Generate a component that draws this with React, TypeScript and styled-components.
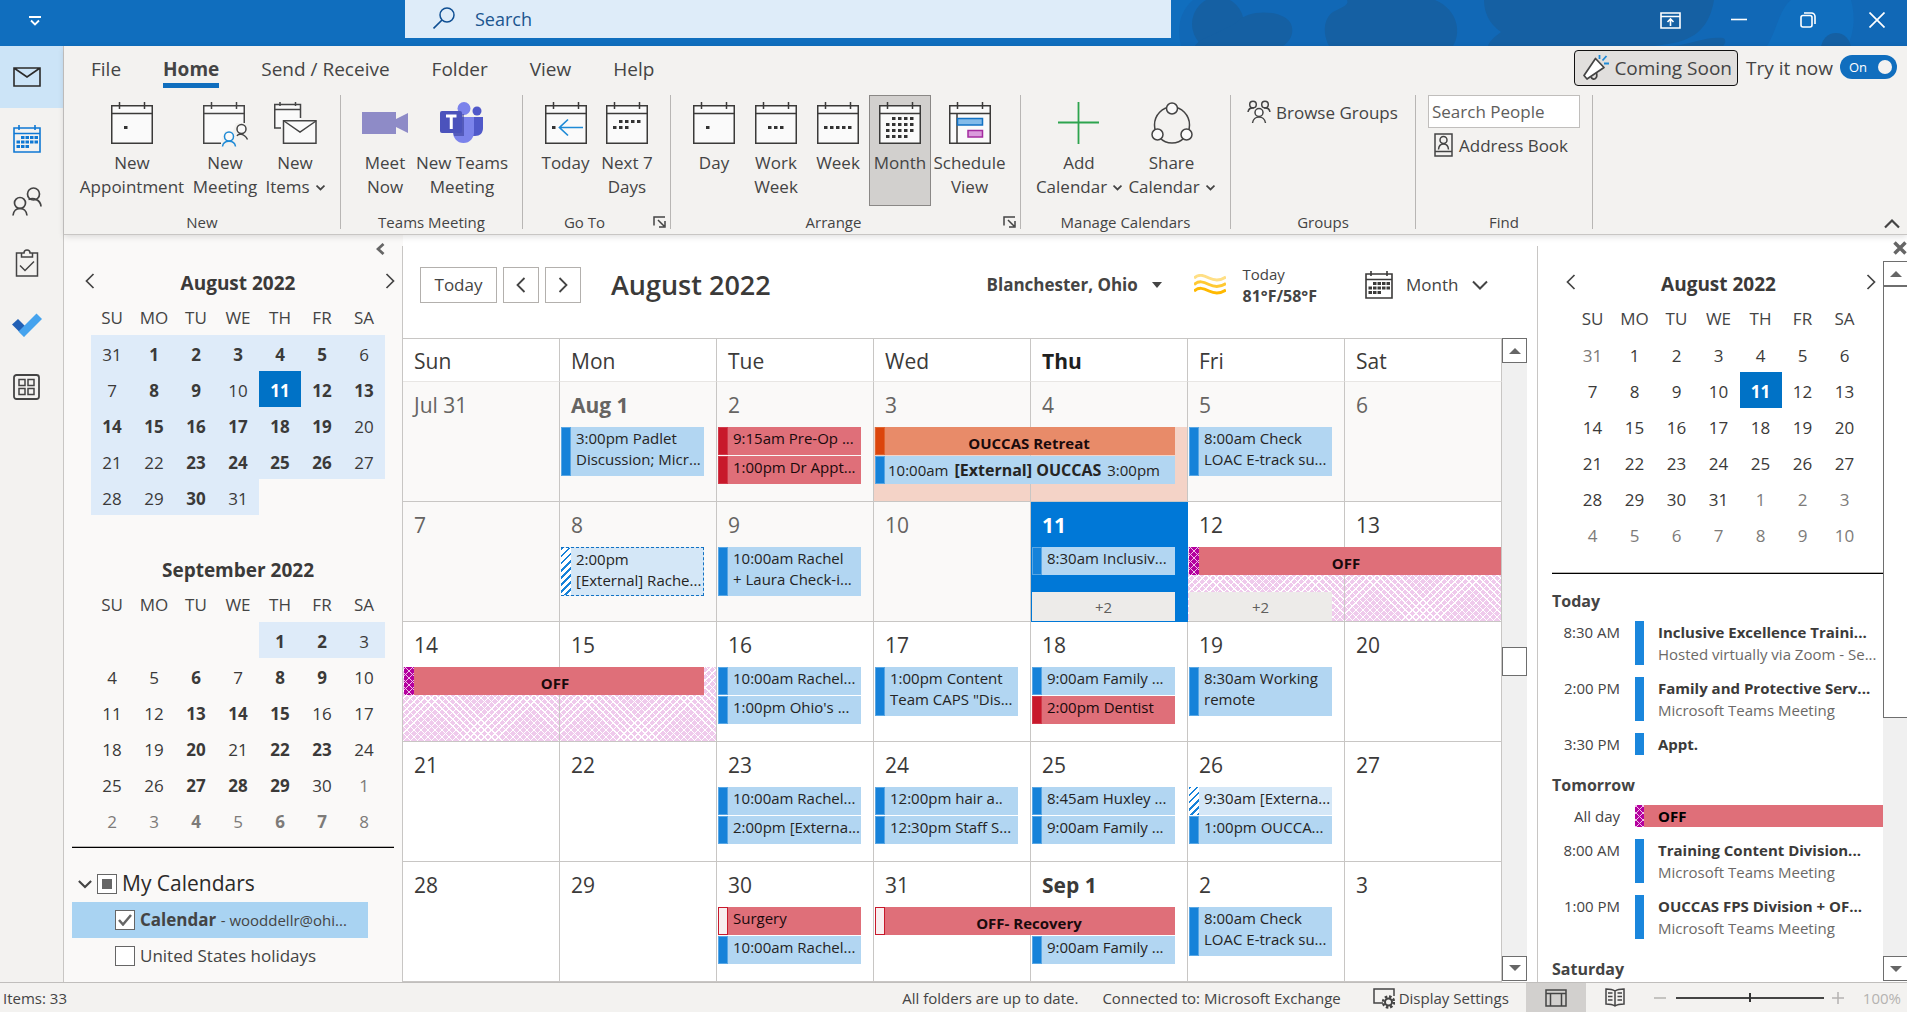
import React from "react";
import styled, { createGlobalStyle, css } from "styled-components";

const BLUE = "#106ebe";
const INK = "#444444";
const LINE = "#c8c6c4";

const GlobalStyle = createGlobalStyle`
  *, *::before, *::after { box-sizing: border-box; }
  body {
    margin: 0;
    background: #f3f2f0;
    color: ${INK};
    font-family: "Open Sans", "Noto Sans", sans-serif;
    font-size: 17px;
  }
  button, input, select { font: inherit; color: inherit; margin: 0; }
  button { border: 0; padding: 0; background: none; cursor: pointer; }
  svg { display: block; flex: none; }
  h1, h2, h3, ul { margin: 0; padding: 0; font-size: inherit; }
  ul { list-style: none; }
`;

/* ---------- shell ---------- */

const Shell = styled.div`
  display: flex;
  flex-direction: column;
  height: 100vh;
  min-width: 1500px;
  overflow: hidden;
`;

const TitleBar = styled.header`
  display: grid;
  grid-template-columns: 405px minmax(300px, 766px) 1fr;
  height: 46px;
  flex: none;
  background: ${BLUE};
  color: #fff;
`;

const QuickAccess = styled.button`
  width: 70px;
  display: grid;
  place-items: center;
  padding-bottom: 4px;
`;

const SearchBox = styled.label`
  display: flex;
  align-items: center;
  gap: 18px;
  height: 38px;
  padding: 0 0 0 28px;
  background: #deecf9;
  color: #0f4f93;
`;

const SearchInput = styled.input`
  flex: 1;
  min-width: 0;
  border: 0;
  outline: 0;
  background: transparent;
  font-size: 18px;
  &::placeholder { color: #1b558f; opacity: 1; }
`;

const Chrome = styled.div`
  display: grid;
  min-width: 0;
  overflow: hidden;
`;

const Artwork = styled.svg`
  grid-area: 1 / 1;
  width: 100%;
  height: 46px;
`;

const WindowButtons = styled.div`
  grid-area: 1 / 1;
  display: flex;
  justify-content: flex-end;
  z-index: 1;
`;

const WindowButton = styled.button`
  display: grid;
  place-items: center;
  width: 69px;
  padding: 0 0 6px 9px;
`;

const Body = styled.div`
  display: flex;
  flex: 1;
  min-height: 0;
`;

const Rail = styled.nav`
  display: flex;
  flex-direction: column;
  width: 64px;
  flex: none;
  border-right: 1px solid ${LINE};
`;

const RailButton = styled.button<{ $active?: boolean }>`
  display: grid;
  place-items: center;
  height: 62px;
  padding-right: 10px;
  background: ${(p) => (p.$active ? "#cce4f7" : "transparent")};
`;

const Workspace = styled.div`
  display: flex;
  flex-direction: column;
  flex: 1;
  min-width: 0;
`;

/* ---------- ribbon ---------- */

const Ribbon = styled.section`
  flex: none;
  border-bottom: 1px solid ${LINE};
  box-shadow: 0 2px 6px rgba(0, 0, 0, 0.12);
  z-index: 1;
`;

const TabRow = styled.div`
  display: flex;
  justify-content: space-between;
  height: 49px;
  padding: 4px 10px 0 27px;
`;

const Tabs = styled.div`
  display: flex;
  gap: 42px;
  align-items: flex-start;
`;

const Tab = styled.button<{ $active?: boolean }>`
  height: 38px;
  padding-top: 5px;
  font-size: 19px;
  line-height: 28px;
  border-bottom: 5px solid ${(p) => (p.$active ? BLUE : "transparent")};
  font-weight: ${(p) => (p.$active ? 700 : 400)};
`;

const TryArea = styled.div`
  display: flex;
  align-items: flex-start;
  gap: 8px;
  font-size: 19px;
`;

const ComingSoon = styled.button`
  display: flex;
  align-items: center;
  gap: 5px;
  height: 36px;
  padding: 0 5px 0 8px;
  border: 1px solid #111;
  border-radius: 4px;
  background: #e1dfdd;
`;

const TryLabel = styled.label`
  display: flex;
  gap: 7px;
  line-height: 36px;
`;

const Switch = styled.span`
  display: grid;
  align-items: center;
  width: 57px;
  height: 24px;
  margin-top: 5px;
  font-size: 13px;
  line-height: 24px;
  color: #fff;
`;

const SwitchInput = styled.input`
  grid-area: 1 / 1;
  appearance: none;
  display: flex;
  align-items: center;
  justify-content: flex-end;
  width: 57px;
  height: 24px;
  padding-right: 5px;
  border-radius: 12px;
  background: ${BLUE};
  &::after {
    content: "";
    width: 14px;
    height: 14px;
    border-radius: 50%;
    background: #f3f2f1;
  }
`;

const SwitchText = styled.span`
  grid-area: 1 / 1;
  padding-left: 9px;
  pointer-events: none;
`;

const Groups = styled.div`
  display: flex;
  height: 139px;
`;

const Group = styled.section<{ $width?: number }>`
  display: flex;
  flex-direction: column;
  justify-content: space-between;
  min-width: ${(p) => p.$width ?? 0}px;
  margin-bottom: 5px;
  padding: 0 12px;
  border-right: 1px solid #b8b6b4;
`;

const GroupFoot = styled.div`
  display: grid;
  grid-template-columns: 1fr auto;
  align-items: center;
  margin: 0 -8px;
  height: 14px;
  line-height: 14px;
  font-size: 15px;
  text-align: center;
  svg { margin-left: 11px; }
`;

const GroupTools = styled.div`
  display: flex;
`;

const ToolStack = styled.div`
  display: flex;
  flex-direction: column;
  align-items: flex-start;
`;

const BigTool = styled.button<{ $width: number; $active?: boolean }>`
  display: flex;
  flex-direction: column;
  align-items: center;
  gap: 7px;
  width: ${(p) => p.$width}px;
  height: 111px;
  padding-top: 6px;
  line-height: 24px;
  white-space: nowrap;
  border: 1px solid ${(p) => (p.$active ? "#8a8886" : "transparent")};
  background: ${(p) => (p.$active ? "#d2d0ce" : "transparent")};
`;

const ToolLabel = styled.span`
  display: flex;
  align-items: center;
  justify-content: center;
  gap: 6px;
`;

const RowTool = styled.button`
  display: flex;
  align-items: center;
  gap: 5px;
  height: 34px;
  padding: 0 4px;
  white-space: nowrap;
`;

const PeopleInput = styled.input`
  width: 152px;
  height: 33px;
  padding: 0 3px;
  border: 1px solid #c0bebc;
  background: #fff;
  &::placeholder { color: #605e5c; opacity: 1; }
`;

const CollapseButton = styled.button`
  margin: auto 7px 2px auto;
`;

/* ---------- panes ---------- */

const Panes = styled.div`
  display: flex;
  flex: 1;
  min-height: 0;
`;

const paneEdge = css`
  border-image: linear-gradient(to bottom, transparent 12px, ${LINE} 12px) 1;
`;

const FolderPane = styled.aside`
  width: 339px;
  flex: none;
  padding: 0 8px;
  background: #faf9f8;
  border-right: 1px solid ${LINE};
  ${paneEdge}
`;

const MiniStack = styled.div`
  display: flex;
  flex-direction: column;
  align-items: flex-end;
  gap: 35px;
`;

const PaneTop = styled.div`
  display: flex;
  justify-content: flex-end;
  align-items: center;
  height: 28px;
  padding-right: 9px;
`;

const Mini = styled.section`
  width: 312px;
  font-size: 17px;
`;

const MiniHead = styled.div`
  display: grid;
  grid-template-columns: 12px 1fr 12px;
  align-items: center;
  height: 36px;
`;

const MiniTitle = styled.h2`
  grid-column: 2;
  padding-top: 4px;
  text-align: center;
  font-size: 19px;
  font-weight: 700;
  color: #3b3a39;
`;

const MiniTable = styled.table`
  margin: 0 auto;
  border-collapse: collapse;
  th, td {
    width: 42px;
    height: 36px;
    padding: 4px 0 0;
    text-align: center;
    font-weight: 400;
    line-height: 24px;
  }
  th { padding-top: 2px; }
`;

const MiniDay = styled.td<{ $shade?: boolean; $bold?: boolean; $dim?: boolean; $today?: boolean }>`
  && {
    font-weight: ${(p) => (p.$bold || p.$today ? 700 : 400)};
    color: ${(p) => (p.$today ? "#fff" : p.$dim ? "#7d7b79" : "#3b3a39")};
    background: ${(p) => (p.$today ? "#0072c6" : p.$shade ? "#deebf9" : "transparent")};
  }
`;

const Rule = styled.hr<{ $top: number; $bottom: number }>`
  height: 2px;
  margin: ${(p) => p.$top}px 0 ${(p) => p.$bottom}px;
  border: 0;
  border-top: 1px solid #b8b6b4;
  background: #000;
`;

const TreeRow = styled.label<{ $level: number; $selected?: boolean }>`
  display: flex;
  align-items: center;
  gap: ${(p) => (p.$level ? 5 : 5)}px;
  width: 296px;
  height: 36px;
  padding-left: ${(p) => (p.$level ? 43 : 6)}px;
  white-space: nowrap;
  font-size: ${(p) => (p.$level ? 17 : 21)}px;
  color: ${(p) => (p.$level ? INK : "#2b2a29")};
  background: ${(p) => (p.$selected ? "#a9d3f2" : "transparent")};
`;

const Tick = styled.span`
  display: grid;
  place-items: center;
  width: 20px;
  height: 20px;
  svg { grid-area: 1 / 1; z-index: 1; pointer-events: none; }
`;

const TickInput = styled.input`
  grid-area: 1 / 1;
  appearance: none;
  width: 20px;
  height: 20px;
  border: 1px solid #666;
  background: #fff;
`;

const TreeText = styled.span`
  padding-bottom: 2px;
`;

const Account = styled.span`
  font-size: 15px;
`;

/* ---------- month view ---------- */

const Main = styled.main`
  display: flex;
  flex-direction: column;
  flex: 1;
  min-width: 0;
  background: #fff;
  border-right: 1px solid ${LINE};
  ${paneEdge}
`;

const MonthBar = styled.div`
  display: flex;
  align-items: center;
  height: 103px;
  flex: none;
  padding: 0 49px 4px 17px;
`;

const Outlined = styled.button<{ $width: number }>`
  display: grid;
  place-items: center;
  width: ${(p) => p.$width}px;
  height: 36px;
  margin-right: 6px;
  border: 1px solid #b3b0ad;
`;

const MonthTitle = styled.h1`
  margin: 0 auto 0 24px;
  font-size: 27px;
  font-weight: 600;
  line-height: 36px;
  color: #3b3a39;
`;

const Picker = styled.label<{ $bold?: boolean; $gap: number }>`
  display: flex;
  align-items: center;
  gap: ${(p) => p.$gap}px;
  font-weight: ${(p) => (p.$bold ? 700 : 400)};
`;

const PickerSelect = styled.select`
  appearance: none;
  border: 0;
  padding: 0;
  background: transparent;
  font-size: 17px;
  line-height: 24px;
`;

const Weather = styled.div`
  display: flex;
  align-items: center;
  gap: 17px;
  margin: 0 48px 0 32px;
  font-size: 15px;
  line-height: 22px;
  strong { display: block; font-size: 16px; }
`;

const MonthArea = styled.div`
  display: flex;
  flex: 1;
  min-height: 0;
  padding-right: 10px;
`;

const MonthGrid = styled.div`
  display: grid;
  grid-template-rows: 44px;
  grid-auto-rows: minmax(0, 1fr);
  flex: 1;
  min-width: 0;
`;

const Weekdays = styled.div`
  display: grid;
  grid-template-columns: repeat(7, minmax(0, 1fr));
  border-top: 1px solid ${LINE};
`;

const Weekday = styled.div<{ $today?: boolean }>`
  padding: 5px 11px 0;
  font-size: 21px;
  line-height: 34px;
  font-weight: ${(p) => (p.$today ? 700 : 400)};
  color: ${(p) => (p.$today ? "#201f1e" : "#3b3a39")};
  border-right: 1px solid ${LINE};
  border-bottom: 1px solid #e8e6e4;
`;

const Week = styled.div`
  display: grid;
  grid-template-columns: repeat(7, minmax(0, 1fr));
  grid-template-rows: 45px 29px 29px minmax(0, 1fr);
`;

const Day = styled.div<{ $col: number; $tone: string; $bold?: boolean }>`
  grid-column: ${(p) => p.$col};
  grid-row: 1 / -1;
  padding: 7px 11px 0;
  font-size: 21px;
  line-height: 32px;
  font-weight: ${(p) => (p.$bold ? 700 : 400)};
  border-right: 1px solid ${LINE};
  border-bottom: 1px solid ${LINE};
  ${(p) =>
    p.$tone === "today"
      ? css`background: #0078d7; border-color: #0078d7; color: #fff;`
      : p.$tone === "past"
        ? css`background: #faf9f8; color: #666462;`
        : css`background: #fff; color: #3b3a39;`}
`;

const hatch = (dot: string, line: string) => css`
  background-color: ${dot};
  background-image: repeating-linear-gradient(45deg, ${line} 0 1px, transparent 1px 5px),
    repeating-linear-gradient(-45deg, ${line} 0 1px, transparent 1px 5px);
`;

const Wash = styled.div<{ $col: number; $kind: string }>`
  grid-column: ${(p) => p.$col};
  grid-row: 2 / -1;
  margin: 0 1px 1px 0;
  ${(p) => (p.$kind === "away" ? hatch("#efcaec", "#ffffff") : css`background: #f4d3c7;`)}
`;

const fills: Record<string, string> = {
  blue: "#b2d6f2",
  red: "#df6f79",
  orange: "#e88b69",
  pale: "#d4e7f7",
};

const strips: Record<string, ReturnType<typeof css>> = {
  blue: css`background: #1682d9; border: 1px solid #58a6e4;`,
  red: css`background: #c8192b; border: 1px solid #d0394a;`,
  orange: css`background: #dc450c; border: 1px solid #e0642f;`,
  tentative: css`background: repeating-linear-gradient(135deg, #1682d9 0 2px, #fff 2px 5px);`,
  away: hatch("#b4009e", "#f1bfe9"),
  free: css`background: #f8eff0; border: 1px solid #c8192b;`,
};

const Event = styled.button<{ $col: number; $span: number; $row: number; $lines: number; $fill: string; $dashed?: boolean; $open?: boolean }>`
  grid-column: ${(p) => p.$col} / span ${(p) => p.$span};
  grid-row: ${(p) => p.$row + 1} / span ${(p) => p.$lines};
  display: flex;
  height: ${(p) => (p.$lines === 2 ? 49 : 28)}px;
  margin-left: 1px;
  margin-right: ${(p) => (p.$open ? 1 : 13)}px;
  overflow: hidden;
  text-align: left;
  font-size: 15px;
  line-height: 21px;
  white-space: nowrap;
  color: ${(p) => (p.$fill === "red" || p.$fill === "orange" ? "#1a0a0c" : "#252423")};
  background: ${(p) => fills[p.$fill]};
  ${(p) => p.$dashed && css`border: 1px dashed #1272c4; border-left: 0;`}
`;

const Strip = styled.span<{ $kind: string }>`
  width: 10px;
  flex: none;
  ${(p) => strips[p.$kind]}
`;

const EventText = styled.span<{ $center?: boolean; $balanced?: boolean }>`
  display: block;
  flex: 1;
  min-width: 0;
  padding: ${(p) => (p.$center ? `6px ${p.$balanced ? 8 : 2}px 0 0` : "1px 0 0 5px")};
  text-align: ${(p) => (p.$center ? "center" : "left")};
  font-weight: ${(p) => (p.$center ? 700 : 400)};
`;

const EventLine = styled.span`
  display: block;
`;

const TimedText = styled.span`
  display: flex;
  gap: 6px;
  padding: 4px 0 0 3px;
  strong { font-size: 16px; }
`;

const More = styled.button<{ $col: number }>`
  grid-column: ${(p) => p.$col};
  grid-row: 3 / -1;
  align-self: end;
  height: 29px;
  margin: 0 13px 1px 1px;
  background: #edebe9;
  color: #605e5c;
  font-size: 15px;
`;

/* ---------- scroll bars ---------- */

const ScrollTrack = styled.div`
  display: flex;
  flex-direction: column;
  width: 25px;
  flex: none;
  margin: 0 0 1px;
  background: #f0f0f0;
`;

const ScrollArrow = styled.button`
  display: grid;
  place-items: center;
  height: 25px;
  flex: none;
  border: 1px solid #6e6e6e;
  background: #fff;
`;

const ScrollThumb = styled.div<{ $grow: number }>`
  flex: ${(p) => p.$grow};
  border: 1px solid #6e6e6e;
  background: #fff;
`;

const ScrollSpace = styled.div<{ $grow: number }>`
  flex: ${(p) => p.$grow};
`;

/* ---------- to-do pane ---------- */

const TodoPane = styled.aside`
  display: grid;
  grid-template-columns: minmax(0, 1fr) 24px;
  grid-template-rows: 26px minmax(0, 1fr);
  width: 369px;
  flex: none;
  background: #fff;
`;

const CloseButton = styled.button`
  grid-column: 2;
  display: grid;
  place-items: center;
  padding: 0 0 0 10px;
  margin-top: 6px;
  height: 14px;
`;

const Agenda = styled.div`
  grid-row: 2;
  padding: 3px 0 0 14px;
  overflow: hidden;
`;

const AgendaCalendar = styled.div`
  display: flex;
  justify-content: center;
  padding-left: 2px;
`;

const AgendaDay = styled.h3`
  font-size: 16px;
  font-weight: 700;
  line-height: 22px;
  white-space: nowrap;
  margin-bottom: 9px;
`;

const AgendaList = styled.ul`
  margin-bottom: 19px;
`;

const AgendaItem = styled.li`
  display: grid;
  grid-template-columns: 68px 9px minmax(0, 1fr);
  column-gap: 15px;
  margin-bottom: 12px;
  font-size: 15px;
  line-height: 22px;
  white-space: nowrap;
`;

const AgendaTime = styled.span`
  text-align: right;
`;

const AgendaBar = styled.span<{ $away?: boolean }>`
  ${(p) => (p.$away ? hatch("#b4009e", "#f1bfe9") : css`background: #1a86dc;`)}
`;

const AgendaText = styled.span<{ $away?: boolean }>`
  margin-left: -15px;
  padding-left: 14px;
  overflow: hidden;
  color: #6b6967;
  ${(p) => p.$away && css`background: #df6f79;`}
  strong { display: block; color: ${(p) => (p.$away ? "#000" : "#3b3a39")}; }
`;

/* ---------- status bar ---------- */

const StatusBar = styled.footer`
  display: flex;
  align-items: center;
  height: 30px;
  flex: none;
  border-top: 1px solid #c0bebc;
  padding: 0 6px 0 3px;
  font-size: 15px;
  white-space: nowrap;
`;

const StatusText = styled.span<{ $push?: boolean }>`
  margin: 0 24px 0 ${(p) => (p.$push ? "auto" : "0")};
`;

const StatusButton = styled.button<{ $active?: boolean; $width?: number }>`
  display: flex;
  align-items: center;
  justify-content: center;
  gap: 4px;
  width: ${(p) => (p.$width ? `${p.$width}px` : "auto")};
  height: 29px;
  background: ${(p) => (p.$active ? "#d2d0ce" : "transparent")};
`;

const DisplayButton = styled(StatusButton)`
  margin: 0 17px 0 8px;
`;

const ZoomRange = styled.input`
  appearance: none;
  width: 148px;
  height: 14px;
  margin: 0 8px 0 0;
  background: linear-gradient(#444, #444) center / 100% 2px no-repeat;
  &::-webkit-slider-thumb {
    appearance: none;
    width: 2px;
    height: 9px;
    background: #333;
  }
`;

const ZoomValue = styled.span`
  margin-left: 19px;
  color: #b5b3b1;
`;

/* ---------- drawings ---------- */

const stroke = { fill: "none", stroke: "#444", strokeWidth: 1.5 } as const;

const Chevron = ({ dir, size = 16, width = 2 }: { dir: "left" | "right" | "up" | "down"; size?: number; width?: number }) => {
  const paths = { left: "M11.5 1 4.5 8l7 7", right: "M4.5 1l7 7-7 7", up: "M1 11.5 8 4.5l7 7", down: "M1 4.5l7 7 7-7" };
  return (
    <svg width={size} height={size} viewBox="0 0 16 16" aria-hidden>
      <path d={paths[dir]} fill="none" stroke="#444" strokeWidth={width} />
    </svg>
  );
};

const Caret = ({ up }: { up?: boolean }) => (
  <svg width="12" height="6" viewBox="0 0 12 6" aria-hidden>
    <path d={up ? "M0 6 6 0l6 6z" : "M0 0h12L6 6z"} fill="#666" />
  </svg>
);

const SheetIcon = ({ rows = [], children }: { rows?: [number, number[]][]; children?: React.ReactNode }) => (
  <svg width="42" height="42" viewBox="0 0 42 42" aria-hidden>
    <path d="M.75 3.75h40.5v37.5H.75z" fill="#fafafa" stroke="#3b3a39" strokeWidth="1.5" />
    <path d="M1 11.5h40M8.5 0v7M33.5 0v7" stroke="#3b3a39" strokeWidth="1.5" />
    {rows.map(([y, xs]) => xs.map((x) => <rect key={`${x}-${y}`} x={x - 2} y={y - 1.5} width="3.5" height="3" fill="#333" />))}
    {children}
  </svg>
);

const MeetingIcon = () => (
  <svg width="46" height="42" viewBox="0 0 46 42" overflow="visible" aria-hidden>
    <path d="M1.75 3.75h40.5v37.5H1.75z" fill="#fafafa" />
    <path d="M42.25 21V3.75H1.75v37.5H20M2 11.5h40M9.5 0v7M34.5 0v7" {...stroke} />
    <path d="M19 45v-6l4-10h8l3-8h12v24z" fill="#f3f2f0" />
    <circle cx="39.5" cy="27" r="4.5" {...stroke} fill="#fafafa" />
    <path d="M35 34c1-2 7-3.5 10.5 3.5" {...stroke} />
    <circle cx="27" cy="34.5" r="4.5" {...stroke} fill="#fafafa" stroke="#1e8ad6" />
    <path d="M20.5 44.5c1-7 12-7 13 0" {...stroke} stroke="#1e8ad6" />
  </svg>
);

const ItemsIcon = () => (
  <svg width="43" height="42" viewBox="0 0 43 42" aria-hidden>
    <path d="M.75 2.5h26V26H.75z" fill="#fafafa" />
    <path d="M26.5 16V2.5H.75V26H7M1 7.5h26M6 0v4M21.5 0v4" {...stroke} />
    <path d="M9.5 18.75h32.5v22.5H9.5z" {...stroke} fill="#fafafa" />
    <path d="M10 19l16 11 16-11" {...stroke} />
  </svg>
);

const CameraIcon = () => (
  <svg width="46" height="42" viewBox="0 0 46 42" aria-hidden>
    <path d="M0 10h34v7l12-6v20l-12-6v7H0z" fill="#8e8bc7" />
  </svg>
);

const TeamsIcon = () => (
  <svg width="44" height="42" viewBox="0 0 44 42" aria-hidden>
    <circle cx="24" cy="6.5" r="6.5" fill="#7b83eb" />
    <circle cx="37" cy="9" r="4.5" fill="#5059c9" />
    <path d="M31 15h12v11c0 5-3 8-8 8h-4z" fill="#5059c9" />
    <path d="M13 15h21v15c0 6-4 11-10.5 11S13 36 13 30z" fill="#7b83eb" />
    <path d="M10 12h14v22H14z" fill="#343a94" opacity=".55" />
    <rect x="0" y="9" width="22" height="22" rx="2" fill="#4b53bc" />
    <path d="M6 14h10.5M11.25 14v13" stroke="#fff" strokeWidth="3" />
  </svg>
);

const PlusIcon = () => (
  <svg width="42" height="42" viewBox="0 0 42 42" aria-hidden>
    <path d="M20.5 0v42M0 20.5h41" stroke="#2da44e" strokeWidth="1.8" />
  </svg>
);

const ShareIcon = () => (
  <svg width="42" height="42" viewBox="0 0 42 42" aria-hidden>
    <ellipse cx="21" cy="23" rx="17.5" ry="18" {...stroke} />
    <circle cx="21" cy="6.5" r="5.5" {...stroke} fill="#fafafa" />
    <circle cx="6.5" cy="32.5" r="5.5" {...stroke} fill="#fafafa" />
    <circle cx="35.5" cy="32.5" r="5.5" {...stroke} fill="#fafafa" />
  </svg>
);

const GroupIcon = () => (
  <svg width="24" height="24" viewBox="0 0 24 24" aria-hidden>
    <g {...stroke}>
      <circle cx="6" cy="4.5" r="3.3" />
      <circle cx="18" cy="4.5" r="3.3" />
      <circle cx="12" cy="12.5" r="4" fill="#fafafa" />
      <path d="M1 12c.5-3 3-4.5 6-4M23 12c-.5-3-3-4.5-6-4M5.5 23c1-8 12-8 13 0" />
    </g>
  </svg>
);

const BookIcon = () => (
  <svg width="22" height="24" viewBox="-2 0 22 24" aria-hidden>
    <path d="M1 1h17v22H1zM1 18.5h17" {...stroke} />
    <circle cx="9.5" cy="7" r="3.5" {...stroke} />
    <path d="M4.5 16.5c.5-7.5 9.500-7.500 10 0" {...stroke} />
  </svg>
);

const Launcher = () => (
  <svg width="13" height="12" viewBox="0 0 13 12" aria-hidden>
    <path d="M1 9.5V1h11M5 4l6 6M12 5v6H6" {...stroke} />
  </svg>
);

const MegaphoneIcon = () => (
  <svg width="26" height="26" viewBox="0 0 26 26" aria-hidden>
    <path d="M12.500 3.500l8.500 9L4 24l-3-3.500z" {...stroke} strokeWidth="1.700" fill="#fff" strokeLinejoin="round" />
    <path d="M8 22c2 4 7 2 5.500-4" {...stroke} strokeWidth="1.700" />
    <path d="M16.500 4V0M19.500 5.500 23.500 1M21 8.500H26" stroke="#1e8ad6" strokeWidth="1.800" />
  </svg>
);

const SmallCalendar = ({ color }: { color: string }) => (
  <svg width="28" height="28" viewBox="0 0 28 28" aria-hidden>
    <path d="M1 3h26v24H1zM1 8.500h26M6 0v5M22 0v5" fill="none" stroke={color} strokeWidth="1.6" />
    {[0, 1, 2, 3].map((i) => <rect key={i} x={8 + i * 4.5} y="11" width="3.5" height="3" fill={color} />)}
    {[0, 1, 2, 3, 4].map((i) => <rect key={i} x={3.5 + i * 4.5} y="15.5" width="3.5" height="3" fill={color} />)}
    {[0, 1, 2].map((i) => <rect key={i} x={3.5 + i * 4.5} y="20" width="3.5" height="3" fill={color} />)}
  </svg>
);

const MailIcon = () => (
  <svg width="28" height="20" viewBox="0 0 28 20" aria-hidden>
    <path d="M1 1h26v18H1zM1 1l13 9 13-9" fill="none" stroke="#2b2a29" strokeWidth="1.6" />
  </svg>
);

const PeopleIcon = () => (
  <svg width="30" height="29" viewBox="0 0 30 29" aria-hidden>
    <g {...stroke} strokeWidth="1.7">
      <circle cx="21.5" cy="7" r="6" />
      <path d="M16.5 12.5c5-2 12 0 12.500 7" />
      <circle cx="8" cy="16" r="5.5" />
      <path d="M1 28.5c1-9.500 13-9.500 14 0" />
    </g>
  </svg>
);

const TasksIcon = () => (
  <svg width="24" height="28" viewBox="0 0 24 28" aria-hidden>
    <path d="M7 4H1.5v23h21V4H17M6.500 8V4H9c0-4 6-4 6 0h2.500v4z" {...stroke} />
    <path d="M5 16.5l5 5L19 12.500" {...stroke} />
  </svg>
);

const TodoIcon = () => (
  <svg width="30" height="26" viewBox="0 0 30 26" aria-hidden>
    <path d="M0 12.500 6 7l11 11-5 6.500z" fill="#2160b5" />
    <path d="M24.500 1.500 30 7 12 25l-5.500-5.500z" fill="#45a3ee" />
  </svg>
);

const AppsIcon = () => (
  <svg width="27" height="26" viewBox="0 0 27 26" aria-hidden>
    <rect x="1" y="1" width="25" height="24" rx="2.500" {...stroke} strokeWidth="1.8" />
    <path d="M6 5.500h6v6H6zM15 5.500h6v6h-6zM6 14.500h6v6H6zM15 14.500h6v6h-6z" {...stroke} />
  </svg>
);

const WindIcon = () => (
  <svg width="32" height="22" viewBox="0 0 32 22" aria-hidden>
    {[["#ffdf85", 4], ["#ffc933", 10.5], ["#ffb900", 17]].map(([c, y]) => (
      <path key={y} d={`M0 ${y}c5-4 9-3 15 0s11 3 17-1`} fill="none" stroke={c as string} strokeWidth="3" />
    ))}
  </svg>
);

const HeaderArt = () => (
  <Artwork viewBox="0 0 736 46" preserveAspectRatio="xMinYMin slice" aria-hidden>
    <path d="M22 0h275v46H10C6 28 8 12 22 0z" fill="#1168b6" />
    <path d="M290 0h330c-12 10-14 30-24 46H290zM680 0h56v46h-60c8-14 8-32 4-46z" fill="#1168b6" />
    <g fill="#1560a3">
      <ellipse cx="47" cy="24" rx="26" ry="27" />
      <path d="M66 22c12-14 48-12 54 2 4 10-2 18-8 22H24c4-8 24-12 42-24z" />
      <path d="M176 0h88c24 10 26 34 18 46H158c-8-16-4-32 8-36 8-4 12-6 10-10z" />
      <path d="M313 0h230c-4 24-16 40-46 44l-14 2H317c2-6 8-10 13-14-12-8-17-20-17-32z" />
      <path d="M502 46c18-2 34-10 50-8 4 2 2 6 0 8z" />
      <circle cx="665" cy="48" r="15" />
    </g>
  </Artwork>
);

/* ---------- data ---------- */

type MiniProps = {
  title: string;
  weeks: string[];
  bold?: number[];
  today?: number;
  shade?: [number, number];
  dimBefore?: number;
  dimFrom: number;
  nav?: boolean;
};

const MiniCalendar = ({ title, weeks, bold = [], today, shade, dimBefore = 0, dimFrom, nav }: MiniProps) => (
  <Mini>
    <MiniHead>
      {nav && <button aria-label="Previous month"><Chevron dir="left" width={1.7} /></button>}
      <MiniTitle>{title}</MiniTitle>
      {nav && <button aria-label="Next month"><Chevron dir="right" width={1.7} /></button>}
    </MiniHead>
    <MiniTable>
      <thead>
        <tr>{["SU", "MO", "TU", "WE", "TH", "FR", "SA"].map((d) => <th key={d} scope="col">{d}</th>)}</tr>
      </thead>
      <tbody>
        {weeks.map((week, w) => (
          <tr key={w}>
            {week.split(",").map((label, d) => {
              const i = w * 7 + d;
              return (
                <MiniDay
                  key={d}
                  $bold={bold.includes(i)}
                  $today={i === today}
                  $shade={!!shade && label !== "" && i >= shade[0] && i <= shade[1]}
                  $dim={i < dimBefore || i >= dimFrom}
                >
                  {label}
                </MiniDay>
              );
            })}
          </tr>
        ))}
      </tbody>
    </MiniTable>
  </Mini>
);

type Item = {
  col: number;
  row?: number;
  span?: number;
  lines: string[];
  fill?: string;
  strip?: string;
  center?: boolean;
  dashed?: boolean;
  open?: boolean;
  until?: string;
};

type WeekData = { days: string[]; past?: number; today?: number; wash?: [number, string][]; more?: number[]; items: Item[] };

const month: WeekData[] = [
  {
    days: ["Jul 31", "Aug 1", "2", "3", "4", "5", "6"],
    past: 7,
    wash: [[4, "busy"], [5, "busy"]],
    items: [
      { col: 2, lines: ["3:00pm Padlet", "Discussion; Micr..."] },
      { col: 3, lines: ["9:15am Pre-Op ..."], fill: "red" },
      { col: 3, row: 2, lines: ["1:00pm Dr Appt..."], fill: "red" },
      { col: 4, span: 2, lines: ["OUCCAS Retreat"], fill: "orange", center: true },
      { col: 4, row: 2, span: 2, lines: ["10:00am", "[External] OUCCAS"], until: "3:00pm" },
      { col: 6, lines: ["8:00am Check", "LOAC E-track su..."] },
    ],
  },
  {
    days: ["7", "8", "9", "10", "11", "12", "13"],
    past: 4,
    today: 4,
    wash: [[6, "away"], [7, "away"]],
    more: [5, 6],
    items: [
      { col: 2, lines: ["2:00pm", "[External] Rache..."], fill: "pale", strip: "tentative", dashed: true },
      { col: 3, lines: ["10:00am Rachel", "+ Laura Check-i..."] },
      { col: 5, lines: ["8:30am Inclusiv..."] },
      { col: 6, span: 2, lines: ["OFF"], fill: "red", strip: "away", center: true, open: true },
    ],
  },
  {
    days: ["14", "15", "16", "17", "18", "19", "20"],
    wash: [[1, "away"], [2, "away"]],
    items: [
      { col: 1, span: 2, lines: ["OFF"], fill: "red", strip: "away", center: true },
      { col: 3, lines: ["10:00am Rachel..."] },
      { col: 3, row: 2, lines: ["1:00pm Ohio's ..."] },
      { col: 4, lines: ["1:00pm Content", "Team CAPS \"Dis..."] },
      { col: 5, lines: ["9:00am Family ..."] },
      { col: 5, row: 2, lines: ["2:00pm Dentist"], fill: "red" },
      { col: 6, lines: ["8:30am Working", "remote"] },
    ],
  },
  {
    days: ["21", "22", "23", "24", "25", "26", "27"],
    items: [
      { col: 3, lines: ["10:00am Rachel..."] },
      { col: 3, row: 2, lines: ["2:00pm [Externa..."] },
      { col: 4, lines: ["12:00pm hair a.."] },
      { col: 4, row: 2, lines: ["12:30pm Staff S..."] },
      { col: 5, lines: ["8:45am Huxley ..."] },
      { col: 5, row: 2, lines: ["9:00am Family ..."] },
      { col: 6, lines: ["9:30am [Externa..."], fill: "pale", strip: "tentative" },
      { col: 6, row: 2, lines: ["1:00pm OUCCA..."] },
    ],
  },
  {
    days: ["28", "29", "30", "31", "Sep 1", "2", "3"],
    items: [
      { col: 3, lines: ["Surgery"], fill: "red", strip: "free" },
      { col: 3, row: 2, lines: ["10:00am Rachel..."] },
      { col: 4, span: 2, lines: ["OFF- Recovery"], fill: "red", strip: "free", center: true },
      { col: 5, row: 2, lines: ["9:00am Family ..."] },
      { col: 6, lines: ["8:00am Check", "LOAC E-track su..."] },
    ],
  },
];

const MonthEvent = ({ item }: { item: Item }) => {
  const fill = item.fill ?? "blue";
  const tall = item.lines.length === 2 && !item.until;
  return (
    <Event $col={item.col} $span={item.span ?? 1} $row={item.row ?? 1} $lines={tall ? 2 : 1} $fill={fill} $dashed={item.dashed} $open={item.open}>
      <Strip $kind={item.strip ?? fill} />
      {item.until ? (
        <TimedText>
          <span>{item.lines[0]}</span>
          <strong>{item.lines[1]}</strong>
          <span>{item.until}</span>
        </TimedText>
      ) : (
        <EventText $center={item.center} $balanced={item.strip === "away"}>
          {item.lines.map((line) => <EventLine key={line}>{line}</EventLine>)}
        </EventText>
      )}
    </Event>
  );
};

type AgendaEntry = { time: string; title: string; place?: string; away?: boolean };

const AgendaRows = ({ entries }: { entries: AgendaEntry[] }) => (
  <AgendaList>
    {entries.map((e) => (
      <AgendaItem key={e.time}>
        <AgendaTime>{e.time}</AgendaTime>
        <AgendaBar $away={e.away} />
        <AgendaText $away={e.away}>
          <strong>{e.title}</strong>
          {e.place}
        </AgendaText>
      </AgendaItem>
    ))}
  </AgendaList>
);

const Tool = ({ icon, lines, width, active, menu }: { icon: React.ReactNode; lines: string[]; width: number; active?: boolean; menu?: boolean }) => (
  <BigTool $width={width} $active={active}>
    {icon}
    <span>
      {lines.map((line, i) => (
        <ToolLabel key={line}>
          {line}
          {menu && i === lines.length - 1 && <Chevron dir="down" size={9} width={3} />}
        </ToolLabel>
      ))}
    </span>
  </BigTool>
);

const RibbonGroup = ({ name, width, launcher, children }: { name: string; width?: number; launcher?: boolean; children: React.ReactNode }) => (
  <Group $width={width} aria-label={name}>
    <GroupTools>{children}</GroupTools>
    <GroupFoot>
      <span>{name}</span>
      {launcher && <Launcher />}
    </GroupFoot>
  </Group>
);

export default function App() {
  return (
    <Shell>
      <GlobalStyle />
      <TitleBar>
        <QuickAccess aria-label="Customize Quick Access Toolbar">
          <svg width="12" height="10" viewBox="0 0 12 10" aria-hidden>
            <path d="M0 1h12M2 4.500l4 4 4-4" fill="none" stroke="#fff" strokeWidth="1.8" />
          </svg>
        </QuickAccess>
        <SearchBox>
          <svg width="22" height="24" viewBox="0 0 22 24" aria-hidden>
            <circle cx="14" cy="8" r="7" fill="none" stroke="#0f4f93" strokeWidth="1.5" />
            <path d="M9 13l-8.500 8.500" stroke="#0f4f93" strokeWidth="1.7" />
          </svg>
          <SearchInput placeholder="Search" aria-label="Search" />
        </SearchBox>
        <Chrome>
          <HeaderArt />
          <WindowButtons>
            <WindowButton aria-label="Ribbon Display Options">
              <svg width="21" height="17" viewBox="0 0 21 17" aria-hidden>
                <path d="M1 1h19v15H1zM1 4.500h19M10.500 14V7M7.500 10l3-3 3 3" fill="none" stroke="#fff" strokeWidth="1.6" />
              </svg>
            </WindowButton>
            <WindowButton aria-label="Minimize">
              <svg width="16" height="16" viewBox="0 0 16 16" aria-hidden><path d="M0 7.500h16" stroke="#fff" strokeWidth="1.6" /></svg>
            </WindowButton>
            <WindowButton aria-label="Restore">
              <svg width="16" height="16" viewBox="0 0 16 16" aria-hidden>
                <rect x="1" y="3.500" width="11" height="11.500" rx="2" fill="none" stroke="#fff" strokeWidth="1.6" />
                <path d="M4 1h7.500A3.500 3.500 0 0 1 15 4.500V12" fill="none" stroke="#fff" strokeWidth="1.6" />
              </svg>
            </WindowButton>
            <WindowButton aria-label="Close">
              <svg width="16" height="16" viewBox="0 0 16 16" aria-hidden><path d="M.5.5l15 15m0-15-15 15" stroke="#fff" strokeWidth="1.7" /></svg>
            </WindowButton>
          </WindowButtons>
        </Chrome>
      </TitleBar>

      <Body>
        <Rail aria-label="Modules">
          <RailButton $active aria-label="Mail"><MailIcon /></RailButton>
          <RailButton aria-label="Calendar"><SmallCalendar color="#0f78d4" /></RailButton>
          <RailButton aria-label="People"><PeopleIcon /></RailButton>
          <RailButton aria-label="Tasks"><TasksIcon /></RailButton>
          <RailButton aria-label="To Do"><TodoIcon /></RailButton>
          <RailButton aria-label="More Apps"><AppsIcon /></RailButton>
        </Rail>

        <Workspace>
          <Ribbon>
            <TabRow>
              <Tabs>
                {["File", "Home", "Send / Receive", "Folder", "View", "Help"].map((t) => (
                  <Tab key={t} $active={t === "Home"}>{t}</Tab>
                ))}
              </Tabs>
              <TryArea>
                <ComingSoon><MegaphoneIcon />Coming Soon</ComingSoon>
                <TryLabel>
                  Try it now
                  <Switch>
                    <SwitchInput type="checkbox" defaultChecked />
                    <SwitchText>On</SwitchText>
                  </Switch>
                </TryLabel>
              </TryArea>
            </TabRow>
            <Groups>
              <RibbonGroup name="New">
                <Tool width={112} icon={<SheetIcon rows={[[25.5, [15]]]} />} lines={["New", "Appointment"]} />
                <Tool width={74} icon={<MeetingIcon />} lines={["New", "Meeting"]} />
                <Tool width={66} icon={<ItemsIcon />} lines={["New", "Items"]} menu />
              </RibbonGroup>
              <RibbonGroup name="Teams Meeting" width={182}>
                <Tool width={64} icon={<CameraIcon />} lines={["Meet", "Now"]} />
                <Tool width={90} icon={<TeamsIcon />} lines={["New Teams", "Meeting"]} />
              </RibbonGroup>
              <RibbonGroup name="Go To" launcher>
                <Tool
                  width={61}
                  icon={<SheetIcon rows={[[25.5, [9]]]}><path d="M38 25.5H15M23 17.5l-8.5 8 8.5 8" fill="none" stroke="#1e8ad6" strokeWidth="1.7" /></SheetIcon>}
                  lines={["Today"]}
                />
                <Tool width={62} icon={<SheetIcon rows={[[19.5, [15, 21, 27, 33]], [25.5, [9, 15, 21]]]} />} lines={["Next 7", "Days"]} />
              </RibbonGroup>
              <RibbonGroup name="Arrange" launcher>
                <Tool width={62} icon={<SheetIcon rows={[[25.5, [15]]]} />} lines={["Day"]} />
                <Tool width={62} icon={<SheetIcon rows={[[25.5, [15, 21, 27]]]} />} lines={["Work", "Week"]} />
                <Tool width={62} icon={<SheetIcon rows={[[25.5, [9, 15, 21, 27, 33]]]} />} lines={["Week"]} />
                <Tool
                  width={62}
                  active
                  icon={<SheetIcon rows={[[16.5, [15, 21, 27, 33]], [22.5, [9, 15, 21, 27, 33]], [28.5, [9, 15, 21, 27, 33]], [34.5, [9, 15, 21, 27]]]} />}
                  lines={["Month"]}
                />
                <Tool
                  width={77}
                  icon={
                    <SheetIcon>
                      <path d="M8 12v29" stroke="#3b3a39" strokeWidth="1.5" />
                      <rect x="8.5" y="16.5" width="25" height="6.5" fill="#83bbe9" stroke="#1272c4" strokeWidth="1.5" />
                      <rect x="19" y="28.5" width="14.5" height="6.5" fill="#da9bdc" stroke="#a42ba0" strokeWidth="1.5" />
                    </SheetIcon>
                  }
                  lines={["Schedule", "View"]}
                />
              </RibbonGroup>
              <RibbonGroup name="Manage Calendars">
                <Tool width={92} icon={<PlusIcon />} lines={["Add", "Calendar"]} menu />
                <Tool width={93} icon={<ShareIcon />} lines={["Share", "Calendar"]} menu />
              </RibbonGroup>
              <RibbonGroup name="Groups" width={185}>
                <RowTool><GroupIcon />Browse Groups</RowTool>
              </RibbonGroup>
              <RibbonGroup name="Find">
                <ToolStack>
                  <PeopleInput placeholder="Search People" aria-label="Search People" />
                  <RowTool><BookIcon />Address Book</RowTool>
                </ToolStack>
              </RibbonGroup>
              <CollapseButton aria-label="Collapse the Ribbon"><Chevron dir="up" width={2.2} /></CollapseButton>
            </Groups>
          </Ribbon>

          <Panes>
            <FolderPane>
              <PaneTop>
                <button aria-label="Minimize the Folder Pane">
                  <svg width="9" height="12" viewBox="0 0 9 12" aria-hidden><path d="M7.500 1 2 6l5.500 5" fill="none" stroke="#666" strokeWidth="2.8" /></svg>
                </button>
              </PaneTop>
              <MiniStack>
                <MiniCalendar
                  title="August 2022"
                  nav
                  weeks={["31,1,2,3,4,5,6", "7,8,9,10,11,12,13", "14,15,16,17,18,19,20", "21,22,23,24,25,26,27", "28,29,30,31,,,"]}
                  bold={[1, 2, 3, 4, 5, 8, 9, 12, 13, 14, 15, 16, 17, 18, 19, 23, 24, 25, 26, 30]}
                  today={11}
                  shade={[0, 31]}
                  dimFrom={99}
                />
                <MiniCalendar
                  title="September 2022"
                  weeks={[",,,,1,2,3", "4,5,6,7,8,9,10", "11,12,13,14,15,16,17", "18,19,20,21,22,23,24", "25,26,27,28,29,30,1", "2,3,4,5,6,7,8"]}
                  bold={[4, 5, 9, 11, 12, 16, 17, 18, 23, 25, 26, 30, 31, 32, 37, 39, 40]}
                  shade={[4, 6]}
                  dimFrom={34}
                />
              </MiniStack>
              <Rule $top={8} $bottom={18} />
              <TreeRow $level={0}>
                <Chevron dir="down" size={14} width={2.4} />
                <Tick>
                  <TickInput type="checkbox" />
                  <svg width="10" height="10" aria-hidden><path d="M0 0h10v10H0z" fill="#666" /></svg>
                </Tick>
                <TreeText>My Calendars</TreeText>
              </TreeRow>
              <TreeRow $level={1} $selected>
                <Tick>
                  <TickInput type="checkbox" defaultChecked />
                  <svg width="14" height="12" viewBox="0 0 14 12" aria-hidden><path d="M1 6l4 4.500L13 1" fill="none" stroke="#666" strokeWidth="2.5" /></svg>
                </Tick>
                <TreeText><strong>Calendar</strong> <Account>- wooddellr@ohi...</Account></TreeText>
              </TreeRow>
              <TreeRow $level={1}>
                <Tick><TickInput type="checkbox" /></Tick>
                <TreeText>United States holidays</TreeText>
              </TreeRow>
            </FolderPane>

            <Main>
              <MonthBar>
                <Outlined $width={77}>Today</Outlined>
                <Outlined $width={36} aria-label="Previous"><Chevron dir="left" width={1.8} /></Outlined>
                <Outlined $width={36} aria-label="Next"><Chevron dir="right" width={1.8} /></Outlined>
                <MonthTitle>August 2022</MonthTitle>
                <Picker $bold $gap={13}>
                  <PickerSelect aria-label="Weather location"><option>Blanchester, Ohio</option></PickerSelect>
                  <svg width="10" height="6" viewBox="0 0 10 6" aria-hidden><path d="M0 0h10L5 6z" fill="#444" /></svg>
                </Picker>
                <Weather>
                  <WindIcon />
                  <span>Today<strong>81°F/58°F</strong></span>
                </Weather>
                <Picker $gap={13}>
                  <SmallCalendar color="#3b3a39" />
                  <PickerSelect aria-label="View"><option>Month</option></PickerSelect>
                  <Chevron dir="down" width={2} />
                </Picker>
              </MonthBar>
              <MonthArea>
                <MonthGrid>
                  <Weekdays>
                    {["Sun", "Mon", "Tue", "Wed", "Thu", "Fri", "Sat"].map((d) => <Weekday key={d} $today={d === "Thu"}>{d}</Weekday>)}
                  </Weekdays>
                  {month.map((week) => (
                    <Week key={week.days[0]}>
                      {week.days.map((d, i) => (
                        <Day
                          key={d}
                          $col={i + 1}
                          $bold={d === "Aug 1" || d === "Sep 1" || i === week.today}
                          $tone={i === week.today ? "today" : i < (week.past ?? 0) ? "past" : "plain"}
                        >
                          {d}
                        </Day>
                      ))}
                      {week.wash?.map(([col, kind]) => <Wash key={col} $col={col} $kind={kind} />)}
                      {week.items.map((item, i) => <MonthEvent key={i} item={item} />)}
                      {week.more?.map((col) => <More key={col} $col={col}>+2</More>)}
                    </Week>
                  ))}
                </MonthGrid>
                <ScrollTrack>
                  <ScrollArrow aria-label="Scroll up"><Caret up /></ScrollArrow>
                  <ScrollSpace $grow={285} />
                  <ScrollThumb $grow={27} />
                  <ScrollSpace $grow={281} />
                  <ScrollArrow aria-label="Scroll down"><Caret /></ScrollArrow>
                </ScrollTrack>
              </MonthArea>
            </Main>

            <TodoPane>
              <CloseButton aria-label="Close the To-Do Bar">
                <svg width="14" height="14" viewBox="0 0 14 14" aria-hidden><path d="M1.500 1.500l11 11m0-11-11 11" stroke="#666" strokeWidth="3.5" /></svg>
              </CloseButton>
              <Agenda>
                <AgendaCalendar>
                  <MiniCalendar
                    title="August 2022"
                    nav
                    weeks={["31,1,2,3,4,5,6", "7,8,9,10,11,12,13", "14,15,16,17,18,19,20", "21,22,23,24,25,26,27", "28,29,30,31,1,2,3", "4,5,6,7,8,9,10"]}
                    today={11}
                    dimBefore={1}
                    dimFrom={32}
                  />
                </AgendaCalendar>
                <Rule $top={20} $bottom={16} />
                <AgendaDay>Today</AgendaDay>
                <AgendaRows
                  entries={[
                    { time: "8:30 AM", title: "Inclusive Excellence Traini...", place: "Hosted virtually via Zoom - Se..." },
                    { time: "2:00 PM", title: "Family and Protective Serv...", place: "Microsoft Teams Meeting" },
                    { time: "3:30 PM", title: "Appt." },
                  ]}
                />
                <AgendaDay>Tomorrow</AgendaDay>
                <AgendaRows
                  entries={[
                    { time: "All day", title: "OFF", away: true },
                    { time: "8:00 AM", title: "Training Content Division...", place: "Microsoft Teams Meeting" },
                    { time: "1:00 PM", title: "OUCCAS FPS Division + OF...", place: "Microsoft Teams Meeting" },
                  ]}
                />
                <AgendaDay>Saturday</AgendaDay>
              </Agenda>
              <ScrollTrack>
                <ScrollArrow aria-label="Scroll up"><Caret up /></ScrollArrow>
                <ScrollThumb $grow={431} />
                <ScrollSpace $grow={239} />
                <ScrollArrow aria-label="Scroll down"><Caret /></ScrollArrow>
              </ScrollTrack>
            </TodoPane>
          </Panes>
        </Workspace>
      </Body>

      <StatusBar>
        <StatusText>Items: 33</StatusText>
        <StatusText $push>All folders are up to date.</StatusText>
        <StatusText>Connected to: Microsoft Exchange</StatusText>
        <DisplayButton>
          <svg width="22" height="22" viewBox="0 0 22 22" aria-hidden>
            <path d="M10 16H1V2h20v7" {...stroke} />
            <circle cx="15.5" cy="15" r="5.5" fill="none" stroke="#444" strokeWidth="2.5" strokeDasharray="2.5 1.8" />
            <circle cx="15.5" cy="15" r="3.5" {...stroke} strokeWidth="2" />
          </svg>
          Display Settings
        </DisplayButton>
        <StatusButton $active $width={60} aria-label="Normal view">
          <svg width="22" height="18" viewBox="0 0 22 18" aria-hidden><path d="M1 1h20v16H1zM1 4.500h20M5.500 5v12M16.500 5v12" {...stroke} /></svg>
        </StatusButton>
        <StatusButton $width={58} aria-label="Reading view">
          <svg width="20" height="19" viewBox="0 0 20 19" aria-hidden>
            <path d="M10 3C7 1 4 1 1 1v15c3 0 6 0 9 2 3-2 6-2 9-2V1c-3 0-6 0-9 2zv15M3 5h4.500M3 8.500h4.500M3 12h4.500M12.500 5H17M12.500 8.500H17M12.500 12H17" {...stroke} />
          </svg>
        </StatusButton>
        <StatusButton $width={32} aria-label="Zoom out"><svg width="12" height="12" aria-hidden><path d="M0 6h12" stroke="#b5b3b1" strokeWidth="1.5" /></svg></StatusButton>
        <ZoomRange type="range" aria-label="Zoom" min={0} max={200} defaultValue={100} />
        <StatusButton aria-label="Zoom in"><svg width="12" height="12" aria-hidden><path d="M0 6h12M6 0v12" stroke="#b5b3b1" strokeWidth="1.5" /></svg></StatusButton>
        <ZoomValue>100%</ZoomValue>
      </StatusBar>
    </Shell>
  );
}
